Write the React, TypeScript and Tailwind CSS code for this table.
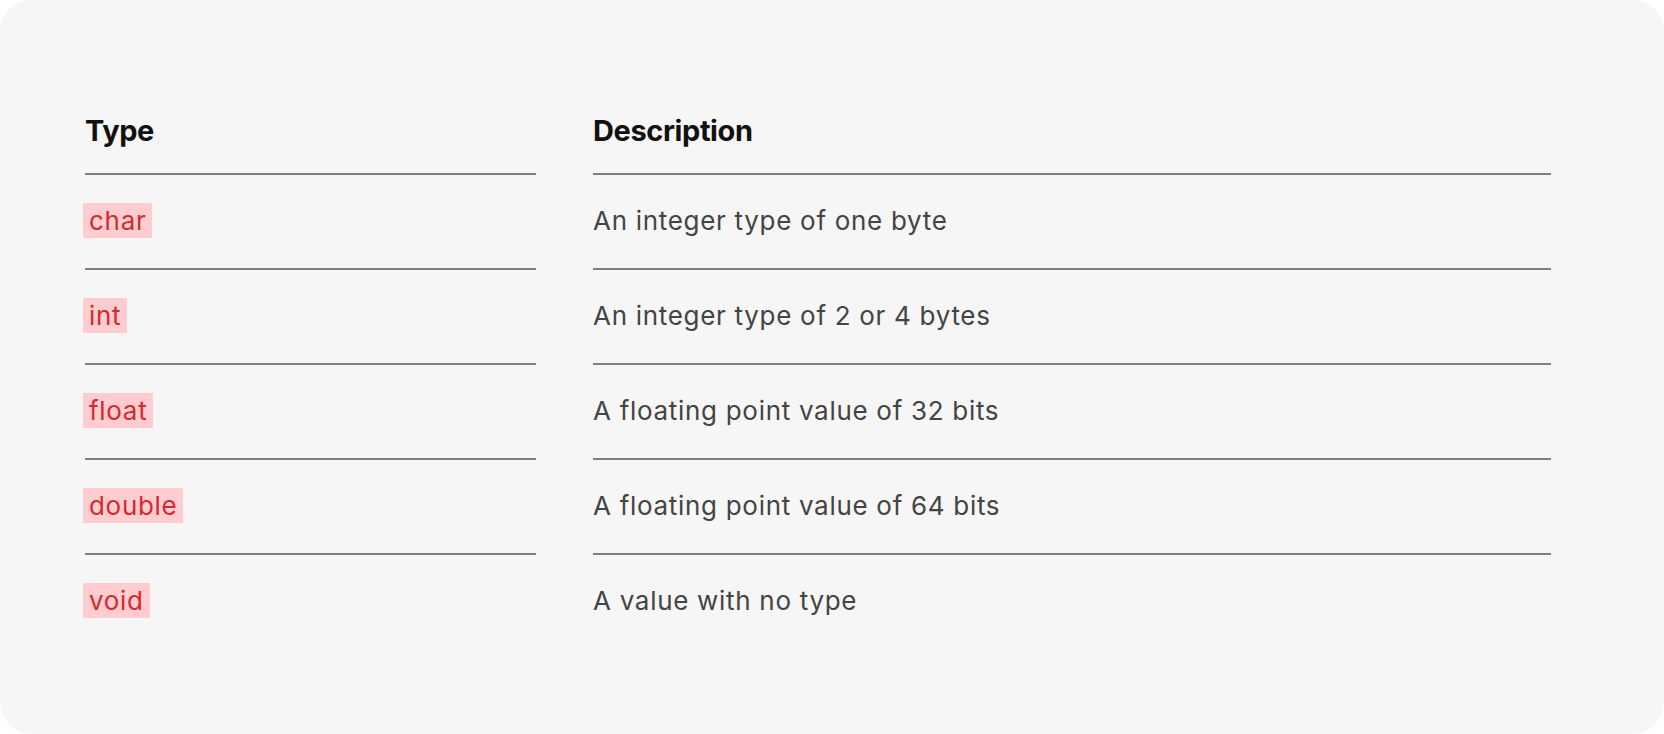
const ROWS = [
  { type: "char", desc: "An integer type of one byte" },
  { type: "int", desc: "An integer type of 2 or 4 bytes" },
  { type: "float", desc: "A floating point value of 32 bits" },
  { type: "double", desc: "A floating point value of 64 bits" },
  { type: "void", desc: "A value with no type" },
]

export default function App() {
  return (
    <div className="bg-white">
      <div className="h-[734px] w-[1664px] rounded-[32px] bg-[#f6f6f6] pl-[85px] pt-[112px] font-['Inter',sans-serif]">
        <div className="w-[1466px]">
          {/* Header */}
          <div className="grid grid-cols-[451px_1fr] gap-x-[57px]">
            <div className="border-b-2 border-[#7f7f7f] pb-[24px] text-[29px] font-bold leading-[37px] tracking-[-0.4px] text-[#111]">
              Type
            </div>
            <div className="border-b-2 border-[#7f7f7f] pb-[24px] text-[29px] font-bold leading-[37px] tracking-[-0.4px] text-[#111]">
              Description
            </div>
          </div>

          {ROWS.map((row, i) => (
            <div key={row.type} className="grid grid-cols-[451px_1fr] gap-x-[57px]">
              <div
                className={`pt-[28px] pb-[30px] ${
                  i < ROWS.length - 1 ? "border-b-2 border-[#7f7f7f]" : ""
                }`}
              >
                <span className="-ml-[2px] inline-block bg-[#ffcdd0] px-[6px] text-[26px] leading-[35px] tracking-[0.7px] text-[#d42a2e]">
                  {row.type}
                </span>
              </div>
              <div
                className={`pt-[28px] pb-[30px] text-[26px] leading-[35px] tracking-[0.7px] text-[#444] ${
                  i < ROWS.length - 1 ? "border-b-2 border-[#7f7f7f]" : ""
                }`}
              >
                {row.desc}
              </div>
            </div>
          ))}
        </div>
      </div>
    </div>
  )
}
